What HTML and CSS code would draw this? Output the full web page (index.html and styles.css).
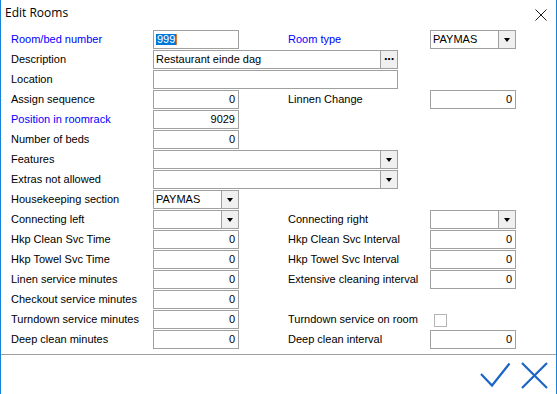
FILE: index.html
```html
<!DOCTYPE html>
<html>
<head>
<meta charset="utf-8">
<link rel="stylesheet" href="styles.css">
</head>
<body>
<div class="window">
  <div class="titlebar">
    <span class="title">Edit Rooms</span>
    <svg class="close" width="12" height="12" viewBox="0 0 12 12"><path d="M0.5 0.5 L11.5 11.5 M11.5 0.5 L0.5 11.5" stroke="#1a1a1a" stroke-width="1" fill="none"/></svg>
  </div>
  <div class="form">
    <div class="lbl c1 blue">Room/bed number</div>
    <div class="box c2"><span class="sel">999</span><span class="caret"></span></div>
    <div class="lbl c4 blue">Room type</div>
    <div class="box combo c5"><span class="val">PAYMAS</span><span class="dd"><i></i></span></div>

    <div class="lbl c1">Description</div>
    <div class="box combo wide"><span class="val">Restaurant einde dag</span><span class="dots">&middot;&middot;&middot;</span></div>

    <div class="lbl c1">Location</div>
    <div class="box wide"></div>

    <div class="lbl c1">Assign sequence</div>
    <div class="box num c2">0</div>
    <div class="lbl c4">Linnen Change</div>
    <div class="box num c5">0</div>

    <div class="lbl c1 blue">Position in roomrack</div>
    <div class="box num c2">9029</div>

    <div class="lbl c1">Number of beds</div>
    <div class="box num c2">0</div>

    <div class="lbl c1">Features</div>
    <div class="box combo wide"><span class="val"></span><span class="dd"><i></i></span></div>

    <div class="lbl c1">Extras not allowed</div>
    <div class="box combo wide"><span class="val"></span><span class="dd"><i></i></span></div>

    <div class="lbl c1">Housekeeping section</div>
    <div class="box combo c2"><span class="val">PAYMAS</span><span class="dd"><i></i></span></div>

    <div class="lbl c1">Connecting left</div>
    <div class="box combo c2"><span class="val"></span><span class="dd"><i></i></span></div>
    <div class="lbl c4">Connecting right</div>
    <div class="box combo c5"><span class="val"></span><span class="dd"><i></i></span></div>

    <div class="lbl c1">Hkp Clean Svc Time</div>
    <div class="box num c2">0</div>
    <div class="lbl c4">Hkp Clean Svc Interval</div>
    <div class="box num c5">0</div>

    <div class="lbl c1">Hkp Towel Svc Time</div>
    <div class="box num c2">0</div>
    <div class="lbl c4">Hkp Towel Svc Interval</div>
    <div class="box num c5">0</div>

    <div class="lbl c1">Linen service minutes</div>
    <div class="box num c2">0</div>
    <div class="lbl c4">Extensive cleaning interval</div>
    <div class="box num c5">0</div>

    <div class="lbl c1">Checkout service minutes</div>
    <div class="box num c2">0</div>

    <div class="lbl c1">Turndown service minutes</div>
    <div class="box num c2">0</div>
    <div class="lbl c4">Turndown service on room</div>
    <div class="check c5"></div>

    <div class="lbl c1">Deep clean minutes</div>
    <div class="box num c2">0</div>
    <div class="lbl c4">Deep clean interval</div>
    <div class="box num c5">0</div>
  </div>
  <div class="footer">
    <svg class="ok" width="31" height="26" viewBox="0 0 31 26"><path d="M1 12 L12 23.5 L29.5 1.5" stroke="#1b65c4" stroke-width="2.2" fill="none"/></svg>
    <svg class="cancel" width="27" height="27" viewBox="0 0 27 27"><path d="M1 1 L26 26 M26 1 L1 26" stroke="#1b65c4" stroke-width="2.2" fill="none"/></svg>
  </div>
</div>
</body>
</html>
```

FILE: styles.css
```css
* { box-sizing: border-box; }
html, body { margin: 0; padding: 0; background: #ffffff; }
body {
  font-family: "Liberation Sans", Arial, sans-serif;
  font-size: 11px;
  color: #000;
}
.window {
  width: 557px;
  height: 394px;
  border-left: 1px solid #1883d7;
  border-right: 1px solid #1883d7;
  background: #fff;
  display: flex;
  flex-direction: column;
  overflow: hidden;
}
.titlebar {
  height: 30px;
  display: flex;
  align-items: flex-start;
  justify-content: space-between;
  padding: 5px 9px 0 4px;
}
.title {
  font-family: "Open Sans", "Noto Sans", sans-serif;
  font-size: 12px;
  line-height: 16px;
  color: #000;
}
.close { margin-top: 4px; }
.form {
  display: grid;
  grid-template-columns: 142px 86px 49px 142px 86px;
  grid-auto-rows: 20px;
  padding-left: 10px;
  height: 324px;
}
.c1 { grid-column: 1; }
.c2 { grid-column: 2; }
.c4 { grid-column: 4; }
.c5 { grid-column: 5; }
.wide { grid-column: 2 / 5; width: 245px; }
.lbl {
  line-height: 19px;
  white-space: nowrap;
  color: #000;
}
.blue { color: #0000ff; }
.box {
  height: 19px;
  border: 1px solid #a0a0a0;
  background: #fff;
  line-height: 17px;
  padding: 0 2px;
  white-space: nowrap;
  overflow: hidden;
  display: flex;
  align-items: center;
}
.num { justify-content: flex-end; padding-right: 3px; }
.combo { padding: 0 0 0 2px; }
.val { flex: 1; }
.dd {
  width: 17px;
  height: 17px;
  background: #f0f0f0;
  border-left: 1px solid #a0a0a0;
  display: flex;
  align-items: center;
  justify-content: center;
}
.dd i {
  display: block;
  width: 0;
  height: 0;
  border-left: 3.5px solid transparent;
  border-right: 3.5px solid transparent;
  border-top: 4px solid #000;
  margin-top: 1px;
}
.dots {
  width: 17px;
  height: 17px;
  background: #f0f0f0;
  border-left: 1px solid #a0a0a0;
  font-weight: bold;
  font-size: 13px;
  line-height: 15px;
  text-align: center;
  letter-spacing: -1px;
}
.sel {
  background: #0078d7;
  color: #fff;
  line-height: 11px;
  padding: 0 1px;
}
.caret {
  display: inline-block;
  width: 1px;
  height: 11px;
  background: #e07a30;
}
.check {
  width: 13px;
  height: 13px;
  border: 1px solid #b4b4b4;
  background: #fff;
  align-self: center;
  margin-left: 4px;
}
.footer {
  flex: 1;
  border-top: 1px solid #a0a0a0;
  display: flex;
  justify-content: flex-end;
  align-items: flex-start;
  padding: 7px 8px 0 0;
  gap: 10px;
}
```
